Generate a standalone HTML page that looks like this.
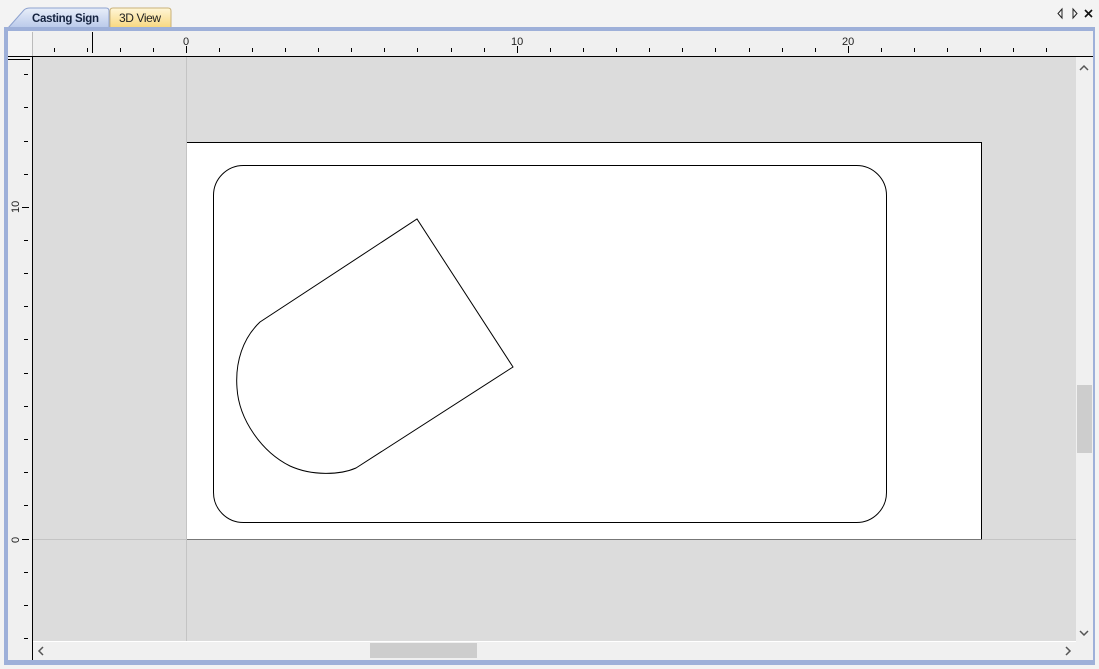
<!DOCTYPE html>
<html><head><meta charset="utf-8"><style>
html,body{margin:0;padding:0;background:#f0f0f0;width:1099px;height:669px;overflow:hidden}
svg{display:block}
text{font-family:"Liberation Sans",sans-serif}
</style></head><body>
<svg width="1099" height="669" viewBox="0 0 1099 669" xmlns="http://www.w3.org/2000/svg">
<defs>
<linearGradient id="t1" x1="0" y1="0" x2="0" y2="1"><stop offset="0" stop-color="#e8eef9"/><stop offset="1" stop-color="#b9c9ea"/></linearGradient>
<linearGradient id="t2" x1="0" y1="0" x2="0" y2="1"><stop offset="0" stop-color="#fff6d8"/><stop offset="1" stop-color="#f8d77e"/></linearGradient>
</defs>
<rect width="1099" height="669" fill="#f3f3f3"/>
<path d="M8,28 L24,10 Q26,8 30,8 L106,8 Q109,8 109,11 L109,28 Z" fill="url(#t1)" stroke="#8fa3cf"/>
<text x="32" y="22" font-size="11.5" font-weight="bold" fill="#15233f" textLength="67">Casting Sign</text>
<path d="M110,28 L110,11 Q110,8 113,8 L168,8 Q171,8 171,11 L171,28 Z" fill="url(#t2)" stroke="#c9b27a"/>
<text x="119" y="22" font-size="12" fill="#222" textLength="42">3D View</text>
<path d="M1062,9 L1058,13.5 L1062,18 Z" fill="none" stroke="#222"/>
<path d="M1073,9 L1077,13.5 L1073,18 Z" fill="none" stroke="#222"/>
<path d="M1085,10 L1092,17 M1092,10 L1085,17" stroke="#111" stroke-width="1.6"/>
<rect x="4" y="27" width="1091" height="638" fill="#9eb0d9"/>
<rect x="8" y="31" width="1085" height="629" fill="#f0f0f0"/>
<rect x="33" y="32" width="1060" height="24" fill="#f0f0f0"/>
<rect x="8" y="57" width="24" height="603" fill="#f0f0f0"/>
<rect x="8" y="31" width="24" height="25" fill="#f4f4f4"/>
<line x1="8" y1="56.5" x2="1093" y2="56.5" stroke="#000"/>
<line x1="32.5" y1="57" x2="32.5" y2="660" stroke="#000"/>
<line x1="32.5" y1="32" x2="32.5" y2="56" stroke="#bbb"/>
<line x1="92.5" y1="32" x2="92.5" y2="53" stroke="#000"/>
<line x1="8" y1="59.5" x2="30" y2="59.5" stroke="#000"/>
<g stroke="#000">
<line x1="54.5" y1="48" x2="54.5" y2="52"/><line x1="87.5" y1="48" x2="87.5" y2="52"/><line x1="120.5" y1="48" x2="120.5" y2="52"/><line x1="153.5" y1="48" x2="153.5" y2="52"/>
<line x1="186.5" y1="46" x2="186.5" y2="53"/>
<line x1="219.5" y1="48" x2="219.5" y2="52"/><line x1="252.5" y1="48" x2="252.5" y2="52"/><line x1="285.5" y1="48" x2="285.5" y2="52"/><line x1="318.5" y1="48" x2="318.5" y2="52"/><line x1="351.5" y1="48" x2="351.5" y2="52"/><line x1="384.5" y1="48" x2="384.5" y2="52"/><line x1="417.5" y1="48" x2="417.5" y2="52"/><line x1="451.5" y1="48" x2="451.5" y2="52"/><line x1="484.5" y1="48" x2="484.5" y2="52"/>
<line x1="517.5" y1="46" x2="517.5" y2="53"/>
<line x1="550.5" y1="48" x2="550.5" y2="52"/><line x1="583.5" y1="48" x2="583.5" y2="52"/><line x1="616.5" y1="48" x2="616.5" y2="52"/><line x1="649.5" y1="48" x2="649.5" y2="52"/><line x1="682.5" y1="48" x2="682.5" y2="52"/><line x1="715.5" y1="48" x2="715.5" y2="52"/><line x1="749.5" y1="48" x2="749.5" y2="52"/><line x1="782.5" y1="48" x2="782.5" y2="52"/><line x1="815.5" y1="48" x2="815.5" y2="52"/>
<line x1="848.5" y1="46" x2="848.5" y2="53"/>
<line x1="881.5" y1="48" x2="881.5" y2="52"/><line x1="914.5" y1="48" x2="914.5" y2="52"/><line x1="947.5" y1="48" x2="947.5" y2="52"/><line x1="980.5" y1="48" x2="980.5" y2="52"/><line x1="1013.5" y1="48" x2="1013.5" y2="52"/><line x1="1046.5" y1="48" x2="1046.5" y2="52"/>
<line x1="24" y1="74.5" x2="28" y2="74.5"/><line x1="24" y1="107.5" x2="28" y2="107.5"/><line x1="24" y1="141.5" x2="28" y2="141.5"/><line x1="24" y1="174.5" x2="28" y2="174.5"/>
<line x1="22" y1="207.5" x2="29" y2="207.5"/>
<line x1="24" y1="240.5" x2="28" y2="240.5"/><line x1="24" y1="273.5" x2="28" y2="273.5"/><line x1="24" y1="306.5" x2="28" y2="306.5"/><line x1="24" y1="339.5" x2="28" y2="339.5"/><line x1="24" y1="373.5" x2="28" y2="373.5"/><line x1="24" y1="406.5" x2="28" y2="406.5"/><line x1="24" y1="439.5" x2="28" y2="439.5"/><line x1="24" y1="472.5" x2="28" y2="472.5"/><line x1="24" y1="505.5" x2="28" y2="505.5"/>
<line x1="22" y1="539.5" x2="29" y2="539.5"/>
<line x1="24" y1="572.5" x2="28" y2="572.5"/><line x1="24" y1="605.5" x2="28" y2="605.5"/><line x1="24" y1="638.5" x2="28" y2="638.5"/>
</g>
<g font-size="11" fill="#222">
<text x="183" y="45">0</text><text x="511" y="45">10</text><text x="842" y="45">20</text>
<text transform="translate(19,213) rotate(-90)">10</text>
<text transform="translate(19,543) rotate(-90)">0</text>
</g>
<rect x="33" y="57" width="1043" height="584" fill="#dcdcdc"/>
<line x1="186.5" y1="57" x2="186.5" y2="641" stroke="#c4c4c4"/>
<line x1="33" y1="539.5" x2="1076" y2="539.5" stroke="#c4c4c4"/>
<rect x="187" y="143" width="794" height="396" fill="#fff"/>
<line x1="187" y1="142.5" x2="982" y2="142.5" stroke="#000"/>
<line x1="981.5" y1="142" x2="981.5" y2="540" stroke="#000"/>
<line x1="187" y1="539.5" x2="982" y2="539.5" stroke="#777"/>
<rect x="213.5" y="165.5" width="673" height="357" rx="30" fill="none" stroke="#000"/>
<path d="M356,468 L513,367 L417,219 L260,322 C243,338 235,362 237,388 C239,420 262,452 290,466 C312,476 340,475 356,468 Z" fill="none" stroke="#000"/>
<rect x="1076" y="57" width="17" height="584" fill="#f0f0f0"/>
<rect x="1077" y="385" width="15" height="68" fill="#cdcdcd"/>
<path d="M1080,70 L1084,66 L1088,70" fill="none" stroke="#555" stroke-width="1.5"/>
<path d="M1080,631 L1084,635 L1088,631" fill="none" stroke="#555" stroke-width="1.5"/>
<rect x="33" y="641" width="1060" height="19" fill="#f0f0f0"/>
<line x1="33" y1="641.5" x2="1076" y2="641.5" stroke="#fff"/>
<rect x="370" y="643" width="107" height="15" fill="#cdcdcd"/>
<path d="M43,647 L39,651 L43,655" fill="none" stroke="#555" stroke-width="1.5"/>
<path d="M1066,647 L1070,651 L1066,655" fill="none" stroke="#555" stroke-width="1.5"/>
</svg>
</body></html>
